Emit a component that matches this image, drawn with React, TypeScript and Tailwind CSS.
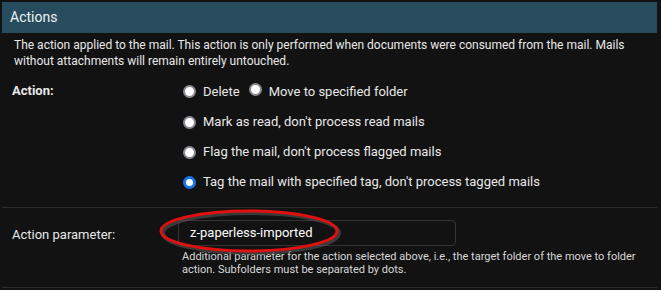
import React from "react";

function Radio({ checked }: { checked?: boolean }) {
  return checked ? (
    <span className="inline-block w-[13px] h-[13px] rounded-full border-[3.5px] border-[#1a73e8] bg-white shrink-0" />
  ) : (
    <span className="inline-block w-[13px] h-[13px] rounded-full border-2 border-[#8a8a93] bg-white shrink-0" />
  );
}

export default function App() {
  return (
    <div
      className="w-[661px] h-[290px] bg-[#121212] text-[#e8e8e8] relative overflow-hidden"
      style={{ fontFamily: "Roboto, 'Liberation Sans', sans-serif" }}
    >
      <div className="pt-[2px] pl-[2px] pr-[4px]">
        <div className="h-[31px] bg-[#264c5e] flex items-center pl-[8px] text-[14px] text-[#f0f0f0]">
          Actions
        </div>
        <div className="px-[12px] pt-[4px] text-[12px] leading-[16px]">
          The action applied to the mail. This action is only performed when documents were consumed from the mail. Mails without attachments will remain entirely untouched.
        </div>
        <div className="flex pl-[10px] pt-[14px]">
          <div className="w-[171px] text-[13px] font-bold leading-[16px]">Action:</div>
          <div className="flex flex-col gap-[14px] text-[13px] leading-[16px]">
            <div className="flex items-center">
              <Radio />
              <span className="ml-[7px]">Delete</span>
              <span className="ml-[9px]"><Radio /></span>
              <span className="ml-[7px]">Move to specified folder</span>
            </div>
            <div className="flex items-center">
              <Radio />
              <span className="ml-[7px]">Mark as read, don't process read mails</span>
            </div>
            <div className="flex items-center">
              <Radio />
              <span className="ml-[7px]">Flag the mail, don't process flagged mails</span>
            </div>
            <div className="flex items-center">
              <Radio checked />
              <span className="ml-[7px]">Tag the mail with specified tag, don't process tagged mails</span>
            </div>
          </div>
        </div>
        <div className="mt-[17px] border-t border-[#2c2c2c]" />
        <div className="flex pl-[10px] pt-[12px] pb-[11px]">
          <div className="w-[166px] text-[13px] leading-[16px] pt-[7px]">Action parameter:</div>
          <div className="flex flex-col">
            <div className="w-[278px] h-[26px] rounded-[4px] border border-[#333] flex items-center pl-[11px] text-[13px] text-white">
              z-paperless-imported
            </div>
            <div className="pl-[4px] pt-[4px] text-[11px] leading-[13px] text-[#d8d8d8] w-[470px]">
              Additional parameter for the action selected above, i.e., the target folder of the move to folder action. Subfolders must be separated by dots.
            </div>
          </div>
        </div>
        <div className="border-t border-[#2c2c2c]" />
      </div>
      <svg
        className="absolute left-[155px] top-[206px]"
        width="190"
        height="52"
        viewBox="0 0 190 52"
      >
        <ellipse cx="96" cy="27" rx="88" ry="20" fill="none" stroke="#555" strokeWidth="4" opacity="0.6" />
        <ellipse cx="94" cy="25" rx="88" ry="20" fill="none" stroke="#e01010" strokeWidth="3" />
      </svg>
    </div>
  );
}
